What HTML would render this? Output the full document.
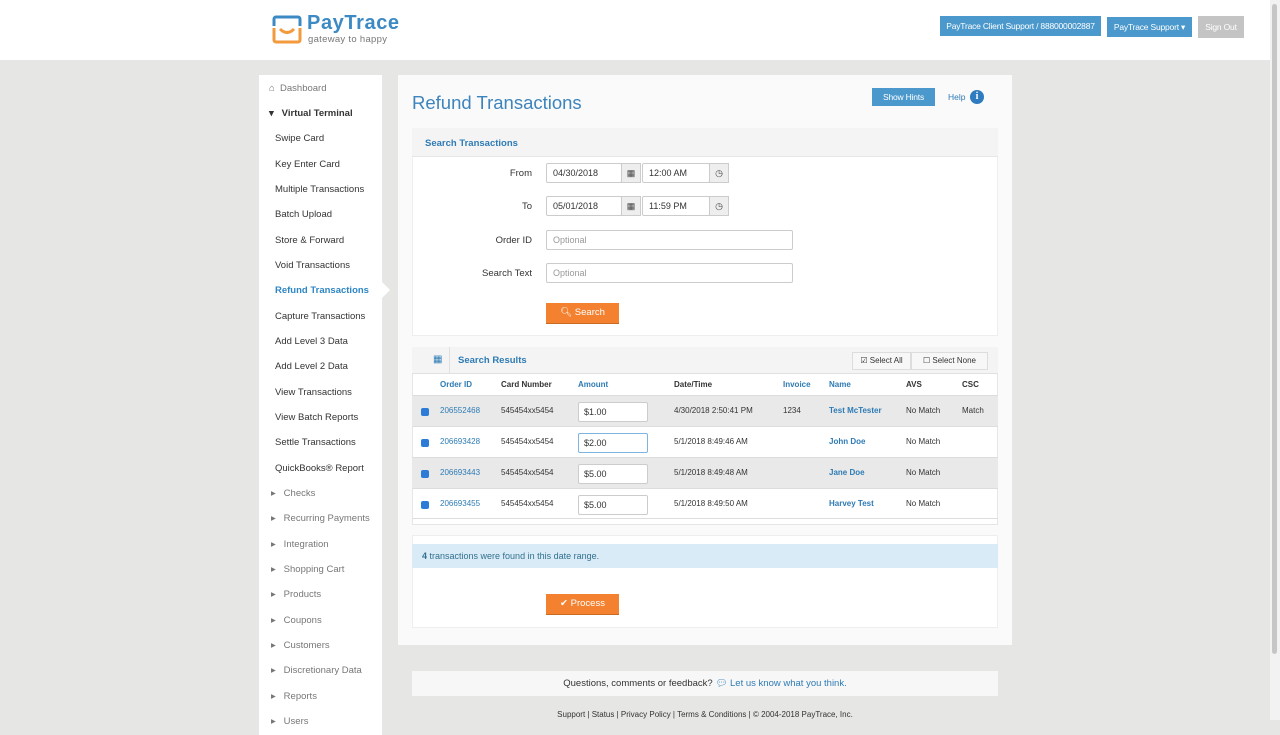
<!DOCTYPE html>
<html><head><meta charset="utf-8"><style>
*{box-sizing:border-box;margin:0;padding:0}
body{width:1280px;height:720px;overflow:hidden;background:#e6e6e4;font-family:"Liberation Sans",sans-serif;font-size:9px;color:#333;position:relative}
.a{position:absolute}
.hdr{left:0;top:0;width:1270px;height:60px;background:#fff}
.btn{position:absolute;color:#fff;font-size:8.5px;text-align:center;letter-spacing:-.2px}
.side{left:259px;top:75px;width:123px;height:660px;background:#fff}
.side div{position:absolute;left:16px;font-size:9.5px;color:#333;white-space:nowrap}
.side .g{color:#777}
.main{left:398px;top:75px;width:614px;height:570px;background:#fafafa}
.lbl{position:absolute;font-size:9.5px;text-align:right;width:80px}
.inp{position:absolute;background:#fff;border:1px solid #ccc;border-radius:2px;font-size:9px;padding-left:6px;line-height:18px;height:20px}
.addon{position:absolute;background:#eee;border:1px solid #ccc;height:20px;width:20px;text-align:center;line-height:18px;font-size:9px;color:#444}
.lnk{color:#2e7bb5}
.row{position:absolute;left:412px;width:586px;height:31px}
.row span{position:absolute;top:10px;font-size:8px;white-space:nowrap}
.cb{position:absolute;left:9px;top:12px;width:8px;height:8px;background:#2c7bd6;border-radius:2px}
.amt{position:absolute;left:166px;top:6px;width:70px;height:20px;background:#fff;border:1px solid #ccc;border-radius:2px;font-size:9px;padding-left:5px;line-height:18px}
.orange{position:absolute;background:#f4812f;color:#fff;font-size:9.5px;text-align:center;line-height:20px;border-bottom:1px solid #c86a22}
</style></head><body>
<div class="a hdr"></div>
<div class="a" style="right:0;top:0;width:10px;height:720px;background:#f2f2f2"></div>
<div class="a" style="left:1272px;top:4px;width:5px;height:650px;background:#c6c6c6;border-radius:3px"></div>
<svg class="a" style="left:270px;top:14px" width="34" height="32" viewBox="0 0 34 32"><path d="M4 12V5a2 2 0 0 1 2-2h22a2 2 0 0 1 2 2v7" stroke="#3c8ac4" stroke-width="3" fill="none"/><path d="M4 14v12a2 2 0 0 0 2 2h22a2 2 0 0 0 2-2V14" stroke="#f29a3c" stroke-width="3" fill="none"/><path d="M10 15q7 7 14 0" stroke="#f29a3c" stroke-width="3" fill="none"/></svg>
<div class="a" style="left:307px;top:12px;font-size:20px;font-weight:bold;color:#3c8ac4;letter-spacing:.6px">PayTrace</div>
<div class="a" style="left:308px;top:34px;font-size:9.5px;color:#777;letter-spacing:.3px">gateway to happy</div>
<div class="btn" style="left:940px;top:16px;width:161px;height:20px;background:#4a98cc;line-height:20px">PayTrace Client Support / 888000002887</div>
<div class="btn" style="left:1107px;top:17px;width:85px;height:20px;background:#4a98cc;line-height:20px">PayTrace Support ▾</div>
<div class="btn" style="left:1198px;top:16px;width:46px;height:22px;background:#c4c4c4;line-height:22px">Sign Out</div>
<div class="a side">
<div class="g" style="top:8px;left:10px">⌂&nbsp; Dashboard</div>
<div style="top:33px;left:10px;font-weight:bold">▾&nbsp;&nbsp; Virtual Terminal</div>
<div style="top:58px">Swipe Card</div>
<div style="top:84px">Key Enter Card</div>
<div style="top:109px">Multiple Transactions</div>
<div style="top:134px">Batch Upload</div>
<div style="top:160px">Store &amp; Forward</div>
<div style="top:185px">Void Transactions</div>
<div style="top:210px;color:#2e86c5;font-weight:bold">Refund Transactions</div>
<div style="top:236px">Capture Transactions</div>
<div style="top:261px">Add Level 3 Data</div>
<div style="top:286px">Add Level 2 Data</div>
<div style="top:312px">View Transactions</div>
<div style="top:337px">View Batch Reports</div>
<div style="top:362px">Settle Transactions</div>
<div style="top:388px">QuickBooks® Report</div>
<div class="g" style="top:413px;left:12px">▸&nbsp;&nbsp; Checks</div>
<div class="g" style="top:438px;left:12px">▸&nbsp;&nbsp; Recurring Payments</div>
<div class="g" style="top:464px;left:12px">▸&nbsp;&nbsp; Integration</div>
<div class="g" style="top:489px;left:12px">▸&nbsp;&nbsp; Shopping Cart</div>
<div class="g" style="top:514px;left:12px">▸&nbsp;&nbsp; Products</div>
<div class="g" style="top:540px;left:12px">▸&nbsp;&nbsp; Coupons</div>
<div class="g" style="top:565px;left:12px">▸&nbsp;&nbsp; Customers</div>
<div class="g" style="top:590px;left:12px">▸&nbsp;&nbsp; Discretionary Data</div>
<div class="g" style="top:616px;left:12px">▸&nbsp;&nbsp; Reports</div>
<div class="g" style="top:641px;left:12px">▸&nbsp;&nbsp; Users</div>
</div>
<div class="a" style="left:382px;top:282px;width:0;height:0;border-top:8px solid transparent;border-bottom:8px solid transparent;border-left:8px solid #fff"></div>
<div class="a main"></div>
<div class="a" style="left:412px;top:92px;font-size:18.5px;color:#3d84bd">Refund Transactions</div>
<div class="btn" style="left:872px;top:88px;width:63px;height:18px;background:#4a98cc;line-height:18px">Show Hints</div>
<div class="a lnk" style="left:948px;top:92px;font-size:8.5px">Help</div>
<div class="a" style="left:970px;top:90px;width:14px;height:14px;border-radius:50%;background:#2e7bc0;color:#fff;font-size:10px;font-weight:bold;text-align:center;line-height:14px;font-family:'Liberation Serif',serif">i</div>
<div class="a" style="left:412px;top:128px;width:586px;height:208px;background:#fff;border:1px solid #eee"></div>
<div class="a" style="left:412px;top:128px;width:586px;height:29px;background:#f4f4f4;border-bottom:1px solid #e6e6e6"></div>
<div class="a lnk" style="left:425px;top:138px;font-size:9.5px;font-weight:bold">Search Transactions</div>
<div class="lbl" style="left:452px;top:168px">From</div>
<div class="inp" style="left:546px;top:163px;width:76px">04/30/2018</div><div class="addon" style="left:621px;top:163px">▦</div>
<div class="inp" style="left:642px;top:163px;width:68px">12:00 AM</div><div class="addon" style="left:709px;top:163px">◷</div>
<div class="lbl" style="left:452px;top:201px">To</div>
<div class="inp" style="left:546px;top:196px;width:76px">05/01/2018</div><div class="addon" style="left:621px;top:196px">▦</div>
<div class="inp" style="left:642px;top:196px;width:68px">11:59 PM</div><div class="addon" style="left:709px;top:196px">◷</div>
<div class="lbl" style="left:452px;top:235px">Order ID</div>
<div class="inp" style="left:546px;top:230px;width:247px;color:#999">Optional</div>
<div class="lbl" style="left:452px;top:268px">Search Text</div>
<div class="inp" style="left:546px;top:263px;width:247px;color:#999">Optional</div>
<div class="orange" style="left:546px;top:303px;width:73px">&#x1F50D;&#xFE0E; Search</div>
<div class="a" style="left:412px;top:347px;width:586px;height:178px;background:#fff;border:1px solid #e6e6e6"></div>
<div class="a" style="left:412px;top:347px;width:586px;height:27px;background:#f4f4f4;border-bottom:1px solid #e0e0e0"></div>
<div class="a" style="left:449px;top:347px;width:1px;height:27px;background:#e0e0e0"></div>
<div class="a lnk" style="left:433px;top:354px;font-size:10px">▦</div>
<div class="a lnk" style="left:458px;top:355px;font-size:9.5px;font-weight:bold">Search Results</div>
<div class="a" style="left:852px;top:352px;width:59px;height:18px;border:1px solid #ddd;background:#f7f7f7;font-size:8px;line-height:16px;text-align:center">☑ Select All</div>
<div class="a" style="left:911px;top:352px;width:77px;height:18px;border:1px solid #ddd;background:#f7f7f7;font-size:8px;line-height:16px;text-align:center">☐ Select None</div>
<div class="row" style="top:374px;height:21px"><span style="left:28px;top:6px;font-weight:bold" class="lnk">Order ID</span><span style="left:89px;top:6px;font-weight:bold">Card Number</span><span class="lnk" style="left:166px;top:6px;font-weight:bold">Amount</span><span style="left:262px;top:6px;font-weight:bold">Date/Time</span><span class="lnk" style="left:371px;top:6px;font-weight:bold">Invoice</span><span class="lnk" style="left:417px;top:6px;font-weight:bold">Name</span><span style="left:494px;top:6px;font-weight:bold">AVS</span><span style="left:550px;top:6px;font-weight:bold">CSC</span></div>
<div class="row" style="top:395px;background:#e9e9e9;border-top:1px solid #ddd"><div class="cb"></div><span class="lnk" style="left:28px">206552468</span><span style="left:89px">545454xx5454</span><div class="amt">$1.00</div><span style="left:262px">4/30/2018 2:50:41 PM</span><span style="left:371px">1234</span><span class="lnk" style="left:417px;font-weight:bold">Test McTester</span><span style="left:494px">No Match</span><span style="left:550px">Match</span></div>
<div class="row" style="top:426px;border-top:1px solid #ddd"><div class="cb"></div><span class="lnk" style="left:28px">206693428</span><span style="left:89px">545454xx5454</span><div class="amt" style="border-color:#7fb3e0">$2.00</div><span style="left:262px">5/1/2018 8:49:46 AM</span><span class="lnk" style="left:417px;font-weight:bold">John Doe</span><span style="left:494px">No Match</span></div>
<div class="row" style="top:457px;background:#e9e9e9;border-top:1px solid #ddd"><div class="cb"></div><span class="lnk" style="left:28px">206693443</span><span style="left:89px">545454xx5454</span><div class="amt">$5.00</div><span style="left:262px">5/1/2018 8:49:48 AM</span><span class="lnk" style="left:417px;font-weight:bold">Jane Doe</span><span style="left:494px">No Match</span></div>
<div class="row" style="top:488px;border-top:1px solid #ddd;border-bottom:1px solid #ddd"><div class="cb"></div><span class="lnk" style="left:28px">206693455</span><span style="left:89px">545454xx5454</span><div class="amt">$5.00</div><span style="left:262px">5/1/2018 8:49:50 AM</span><span class="lnk" style="left:417px;font-weight:bold">Harvey Test</span><span style="left:494px">No Match</span></div>
<div class="a" style="left:412px;top:535px;width:586px;height:93px;background:#fff;border:1px solid #eee"></div>
<div class="a" style="left:412px;top:544px;width:586px;height:24px;background:#d9ebf6;color:#31708f;font-size:9px;line-height:24px;padding-left:10px"><b>4</b> transactions were found in this date range.</div>
<div class="orange" style="left:546px;top:594px;width:73px">✔ Process</div>
<div class="a" style="left:412px;top:671px;width:586px;height:25px;background:#f7f7f7;text-align:center;line-height:25px;font-size:9.5px">Questions, comments or feedback? <span class="lnk">💬&#xFE0E; Let us know what you think.</span></div>
<div class="a" style="left:412px;top:710px;width:586px;text-align:center;font-size:8px">Support | Status | Privacy Policy | Terms &amp; Conditions | © 2004-2018 PayTrace, Inc.</div>
</body></html>
